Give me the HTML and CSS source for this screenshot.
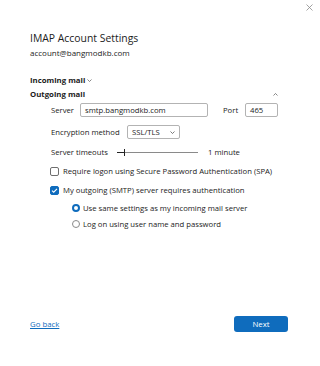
FILE: index.html
```html
<!DOCTYPE html>
<html>
<head>
<meta charset="utf-8">
<link rel="stylesheet" href="styles.css">
</head>
<body>
<div class="dialog">
  <button class="close" aria-label="Close">
    <svg width="7" height="7" viewBox="0 0 7 7"><path d="M0.5 0.5L6.5 6.5M6.5 0.5L0.5 6.5" stroke="#8a8a8a" stroke-width="0.8" fill="none"/></svg>
  </button>
  <div class="title">IMAP Account Settings</div>
  <div class="email">account@bangmodkb.com</div>

  <div class="section-head incoming">Incoming mail<span class="chev-down">
    <svg width="5" height="3" viewBox="0 0 5 3"><path d="M0.5 0.5L2.5 2.5L4.5 0.5" stroke="#555" stroke-width="0.7" fill="none"/></svg></span></div>
  <div class="section-head outgoing"><span>Outgoing mail</span>
    <svg class="chev-up" width="5" height="3" viewBox="0 0 5 3"><path d="M0.5 2.5L2.5 0.5L4.5 2.5" stroke="#555" stroke-width="0.7" fill="none"/></svg></div>

  <div class="row server-row">
    <span class="label">Server</span>
    <div class="input server-input">smtp.bangmodkb.com</div>
    <span class="label port-label">Port</span>
    <div class="input port-input">465</div>
  </div>

  <div class="row enc-row">
    <span class="label">Encryption method</span>
    <div class="select">
      <span>SSL/TLS</span>
      <svg width="5" height="3" viewBox="0 0 5 3"><path d="M0.5 0.5L2.5 2.5L4.5 0.5" stroke="#444" stroke-width="0.7" fill="none"/></svg>
    </div>
  </div>

  <div class="row time-row">
    <span class="label">Server timeouts</span>
    <div class="slider"><div class="fill"></div><div class="thumb"></div></div>
    <span class="label">1 minute</span>
  </div>

  <div class="row check-row spa">
    <span class="checkbox"></span>
    <span class="text">Require logon using Secure Password Authentication (SPA)</span>
  </div>

  <div class="row check-row smtp">
    <span class="checkbox checked">
      <svg width="9" height="9" viewBox="0 0 9 9"><path d="M2 4.6L3.7 6.2L7 2.8" stroke="#fff" stroke-width="1.1" fill="none"/></svg>
    </span>
    <span class="text">My outgoing (SMTP) server requires authentication</span>
  </div>

  <div class="row radio-row r1">
    <span class="radio selected"></span>
    <span class="text">Use same settings as my incoming mail server</span>
  </div>
  <div class="row radio-row r2">
    <span class="radio"></span>
    <span class="text">Log on using user name and password</span>
  </div>

  <div class="footer">
    <a class="back" href="#">Go back</a>
    <button class="next">Next</button>
  </div>
</div>
</body>
</html>
```

FILE: styles.css
```css
html, body {
  margin: 0;
  padding: 0;
  background: #ffffff;
}
body {
  font-family: "Open Sans", "Noto Sans", sans-serif;
  color: #1c1c1c;
}
.dialog {
  position: relative;
  width: 320px;
  height: 366px;
  box-sizing: border-box;
  padding: 30px 32px 34px 30px;
  display: flex;
  flex-direction: column;
  overflow: hidden;
}
.close {
  position: absolute;
  top: 4px;
  right: 7px;
  border: 0;
  background: none;
  padding: 0;
  width: 7px;
  height: 7px;
  display: flex;
}
.title {
  font-size: 10.4px;
  line-height: 16px;
  height: 16px;
  color: #1c1c1c;
}
.email {
  font-size: 8px;
  line-height: 14px;
  height: 14px;
}
.section-head {
  font-size: 7.8px;
  font-weight: 700;
  line-height: 14px;
  height: 14px;
  display: flex;
  align-items: center;
}
.incoming {
  margin-top: 13px;
}
.chev-down {
  margin-left: 2px;
  display: flex;
}
.outgoing {
  justify-content: space-between;
  padding-right: 10px;
}
.row {
  display: flex;
  align-items: center;
  font-size: 7.7px;
  padding-left: 21px;
  color: #222222;
}
.label {
  white-space: nowrap;
}
.server-row {
  margin-top: 2px;
  height: 14px;
}
.input {
  box-sizing: border-box;
  height: 14px;
  border: 1px solid #b3b3b3;
  border-radius: 2px;
  padding-left: 4px;
  display: flex;
  align-items: center;
  color: #1c1c1c;
}
.server-row .label:first-child {
  width: 29px;
}
.server-input {
  width: 128px;
}
.port-label {
  margin-left: 15px;
  width: 22px;
}
.port-input {
  width: 33px;
}
.enc-row {
  margin-top: 8px;
  height: 14px;
}
.enc-row .label {
  width: 76px;
}
.select {
  box-sizing: border-box;
  width: 53px;
  height: 14px;
  border: 1px solid #b3b3b3;
  border-radius: 2px;
  padding: 0 4px 0 4px;
  display: flex;
  align-items: center;
  justify-content: space-between;
  color: #1c1c1c;
}
.time-row {
  margin-top: 6px;
  height: 14px;
}
.time-row .label:first-child {
  width: 66px;
}
.slider {
  position: relative;
  width: 81px;
  height: 7px;
  margin-right: 10px;
}
.slider::before {
  content: "";
  position: absolute;
  left: 0;
  right: 0;
  top: 3px;
  height: 1px;
  background: #8a8a8a;
}
.slider .fill {
  position: absolute;
  left: 0;
  top: 3px;
  width: 7px;
  height: 1px;
  background: #242424;
}
.slider .thumb {
  position: absolute;
  left: 7px;
  top: 0;
  width: 1px;
  height: 7px;
  background: #242424;
}
.check-row {
  height: 14px;
  padding-left: 20px;
}
.spa {
  margin-top: 5px;
}
.smtp {
  margin-top: 5px;
}
.checkbox {
  box-sizing: border-box;
  width: 9px;
  height: 9px;
  border: 1px solid #6e6e6e;
  border-radius: 2px;
  margin-right: 4px;
  display: flex;
  flex-shrink: 0;
}
.checkbox.checked {
  background: #0f6cbd;
  border-color: #0f6cbd;
}
.checkbox.checked svg {
  margin: -1px;
}
.radio-row {
  height: 14px;
  padding-left: 42px;
}
.r1 {
  margin-top: 4px;
}
.r2 {
  margin-top: 2px;
}
.radio {
  box-sizing: border-box;
  width: 8px;
  height: 8px;
  border-radius: 50%;
  border: 1px solid #8a8a8a;
  margin-right: 3px;
  flex-shrink: 0;
}
.radio.selected {
  border: 2.5px solid #0f6cbd;
}
.text {
  white-space: nowrap;
}
.footer {
  margin-top: auto;
  display: flex;
  justify-content: space-between;
  align-items: center;
  height: 16px;
}
.back {
  font-size: 7.8px;
  color: #0f6cbd;
  text-decoration: underline;
}
.next {
  width: 54px;
  height: 16px;
  border: 0;
  border-radius: 3px;
  background: #0f6cbd;
  color: #ffffff;
  font-family: "Open Sans", "Noto Sans", sans-serif;
  font-size: 7.8px;
  padding: 0;
}
```
